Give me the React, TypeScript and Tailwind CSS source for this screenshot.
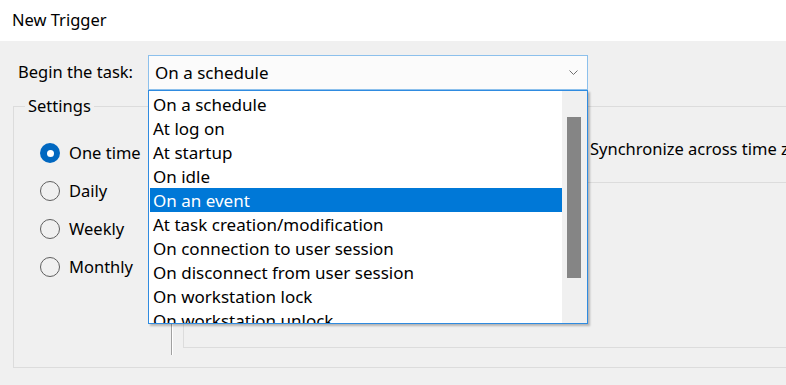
import React from 'react';

const items = [
  'On a schedule',
  'At log on',
  'At startup',
  'On idle',
  'On an event',
  'At task creation/modification',
  'On connection to user session',
  'On disconnect from user session',
  'On workstation lock',
  'On workstation unlock',
];

const font = { fontFamily: '"Segoe UI", "Noto Sans", sans-serif' };

function Radio({ label, checked }: { label: string; checked?: boolean }) {
  return (
    <div className="flex items-center h-[38px]">
      {checked ? (
        <span className="w-[20px] h-[20px] rounded-full bg-[#0067c0] flex items-center justify-center">
          <span className="w-[7px] h-[7px] rounded-full bg-white" />
        </span>
      ) : (
        <span className="w-[20px] h-[20px] rounded-full border border-[#5f5f5f]" />
      )}
      <span className="ml-[9px]">{label}</span>
    </div>
  );
}

export default function App() {
  return (
    <div
      className="w-[786px] h-[385px] overflow-hidden bg-[#f0f0f0] text-[16.5px] text-black relative"
      style={font}
    >
      {/* title bar */}
      <div className="h-[41px] bg-white flex items-center pl-[12px]">New Trigger</div>

      {/* begin the task */}
      <div className="flex items-center h-[35px] mt-[14px] pl-[18px]">
        <span className="w-[130px]">Begin the task:</span>
        <div className="w-[440px] h-[35px] border border-[#8cc0ec] bg-[#fbfbfb] flex items-center pl-[6px] pr-[9px]">
          <span className="flex-1 text-[17px]">On a schedule</span>
          <svg width="9" height="5" viewBox="0 0 9 5" fill="none" stroke="#707070" strokeWidth="1">
            <polyline points="0.5,0.5 4.5,4.5 8.5,0.5" />
          </svg>
        </div>
      </div>

      {/* settings group */}
      <fieldset className="ml-[13px] mt-[8px] w-[820px] h-[270px] border border-[#dcdcdc] px-0 pt-0">
        <legend className="ml-[11px] px-[3px] leading-[16px]">Settings</legend>
        <div className="flex h-full">
          <div className="w-[157px] pl-[26px] pt-[20px]">
            <Radio label="One time" checked />
            <Radio label="Daily" />
            <Radio label="Weekly" />
            <Radio label="Monthly" />
          </div>
          <div className="mt-[25px] h-[216px] w-[2px] border-l border-[#a0a0a0] border-r border-r-white" />
          <div className="flex-1 pl-[10px]">
            <div className="h-[50px] pt-[23px] pl-[407px] whitespace-nowrap">Synchronize across time zones</div>
            <div className="mt-[18px] h-[166px] border border-[#dcdcdc]" />
          </div>
        </div>
      </fieldset>
      <div className="pl-[27px] mt-[12px]">Advanced settings</div>

      {/* open dropdown list */}
      <div className="absolute left-[148px] top-[90px] w-[440px] h-[234px] bg-white border border-[#2f8be0] shadow-[2px_2px_2px_rgba(0,0,0,0.25)] flex text-[17px]">
        <div className="flex-1 pl-[1px] pt-[1px] overflow-hidden">
          {items.map((it) => (
            <div
              key={it}
              className={
                'h-[24px] leading-[25px] pl-[3px] whitespace-nowrap ' +
                (it === 'On an event' ? 'bg-[#0078d7] text-white' : '')
              }
            >
              {it}
            </div>
          ))}
        </div>
        <div className="w-[25px] bg-[#f0f0f0] pt-[26px] pl-[5px]">
          <div className="w-[14px] h-[161px] bg-[#858585]" />
        </div>
      </div>
    </div>
  );
}
